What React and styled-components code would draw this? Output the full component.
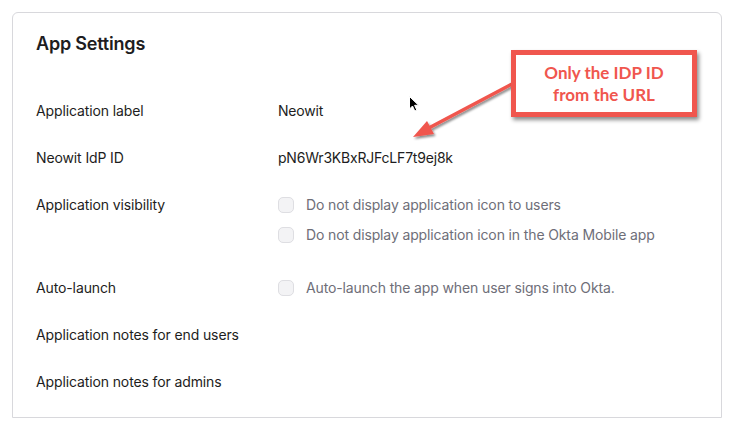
import React from "react";
import styled, { createGlobalStyle } from "styled-components";

const Global = createGlobalStyle`
  html, body { margin: 0; padding: 0; background: #ffffff; }
  body { font-family: Inter, "Noto Sans", sans-serif; -webkit-font-smoothing: antialiased; }
`;

const Page = styled.div`
  width: 732px;
  height: 425px;
  padding: 12px 0 0 12px;
  box-sizing: border-box;
  overflow: hidden;
`;

const Card = styled.section`
  position: relative;
  width: 710px;
  height: 406px;
  box-sizing: border-box;
  border: 1px solid #d8d8dc;
  border-radius: 6px 6px 0 0;
  padding: 19px 24px 0 23px;
  background: #fff;
`;

const Title = styled.h2`
  margin: 0 0 45px;
  font-size: 18px;
  line-height: 24px;
  font-weight: 600;
  color: #1d1d21;
  letter-spacing: -0.2px;
`;

const Rows = styled.div`
  display: flex;
  flex-direction: column;
  gap: 27px;
`;

const Row = styled.div`
  display: grid;
  grid-template-columns: 242px 1fr;
  margin-bottom: ${(p) => p.$extra || 0}px;
`;

const Label = styled.div`
  font-size: 14px;
  line-height: 20px;
  color: #1d1d21;
  letter-spacing: -0.12px;
`;

const Value = styled.div`
  font-size: 14px;
  line-height: 20px;
  color: #1d1d21;
  letter-spacing: -0.2px;
`;

const Options = styled.div`
  display: flex;
  flex-direction: column;
  gap: 10px;
`;

const Option = styled.label`
  display: flex;
  align-items: center;
  gap: 12px;
  font-size: 14px;
  line-height: 20px;
  color: #6e6e78;
  letter-spacing: -0.13px;
`;

const Box = styled.span`
  width: 14px;
  height: 14px;
  border: 1px solid #dedee2;
  border-radius: 5px;
  background: #f3f3f5;
  flex: none;
`;

const Callout = styled.div`
  position: absolute;
  left: 498px;
  top: 37px;
  width: 186px;
  height: 67px;
  box-sizing: border-box;
  border: 5px solid #f0564e;
  background: #fff;
  box-shadow: 2px 3px 4px rgba(0, 0, 0, 0.45);
  display: flex;
  align-items: center;
  justify-content: center;
  text-align: center;
  font-family: Lato, "DejaVu Sans", sans-serif;
  font-weight: 700;
  font-size: 17px;
  line-height: 22px;
  color: #f0564e;
`;

const Overlay = styled.svg`
  position: absolute;
  left: 0;
  top: 0;
  pointer-events: none;
  overflow: visible;
`;

function Check({ children }) {
  return (
    <Option>
      <Box />
      {children}
    </Option>
  );
}

export default function App() {
  return (
    <>
      <Global />
      <Page>
        <Card>
          <Title>App Settings</Title>
          <Rows>
            <Row>
              <Label>Application label</Label>
              <Value>Neowit</Value>
            </Row>
            <Row>
              <Label>Neowit IdP ID</Label>
              <Value>pN6Wr3KBxRJFcLF7t9ej8k</Value>
            </Row>
            <Row $extra={6}>
              <Label>Application visibility</Label>
              <Options>
                <Check>Do not display application icon to users</Check>
                <Check>Do not display application icon in the Okta Mobile app</Check>
              </Options>
            </Row>
            <Row>
              <Label>Auto-launch</Label>
              <Options>
                <Check>Auto-launch the app when user signs into Okta.</Check>
              </Options>
            </Row>
            <Row>
              <Label>Application notes for end users</Label>
            </Row>
            <Row>
              <Label>Application notes for admins</Label>
            </Row>
          </Rows>

          <Overlay width="710" height="406" viewBox="0 0 710 406">
            <defs>
              <filter id="sh" x="-20%" y="-20%" width="140%" height="140%">
                <feDropShadow dx="1.5" dy="2" stdDeviation="1.2" floodColor="#000" floodOpacity="0.45" />
              </filter>
            </defs>
            <g filter="url(#sh)">
              <line x1="499" y1="71" x2="412" y2="117" stroke="#f0564e" strokeWidth="3.5" strokeLinecap="round" />
              <polygon points="400,124 414,108 421,121" fill="#f0564e" />
            </g>
            <g transform="translate(396 83)">
              <path d="M0.5 0.5 L0.5 13 L3.5 10 L5.8 15 L7.8 14.1 L5.6 9.3 L9.6 9.3 Z" fill="#000" stroke="#fff" strokeWidth="1" strokeLinejoin="round" />
            </g>
          </Overlay>
          <Callout>
            Only the IDP ID
            <br />
            from the URL
          </Callout>
        </Card>
      </Page>
    </>
  );
}
